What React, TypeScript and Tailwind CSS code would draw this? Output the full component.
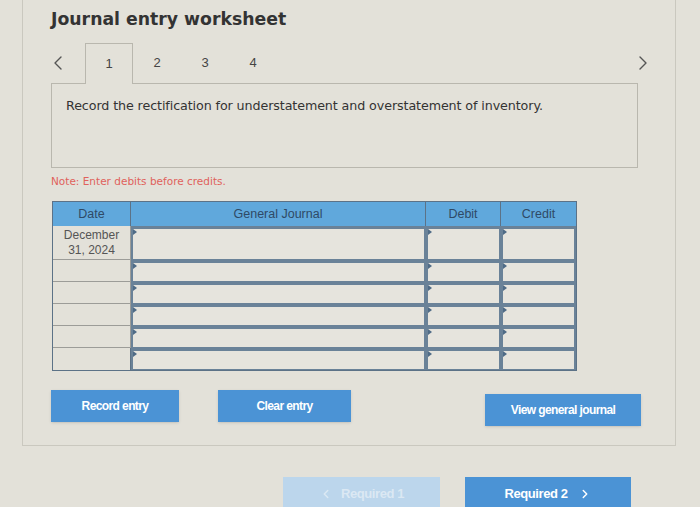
import { ChevronLeft, ChevronRight } from 'lucide-react'

const rows = [
  { date: 'December\n31, 2024', h: 'h-[34px]' },
  { date: '', h: 'h-[22px]' },
  { date: '', h: 'h-[22px]' },
  { date: '', h: 'h-[22px]' },
  { date: '', h: 'h-[22px]' },
  { date: '', h: 'h-[22px]' },
]

function InputCell() {
  return (
    <div className="relative h-full border-x-2 border-t-[3px] border-b border-[#6a8298] bg-[#e6e4dd]">
      {/* dropdown marker */}
      <span className="absolute left-0 top-0 w-0 h-0 border-y-[3px] border-y-transparent border-l-[4px] border-l-[#4f6b86]" />
    </div>
  )
}

function BlueButton({ label, w, className = '' }: { label: string; w: string; className?: string }) {
  return (
    <button
      className={`${w} h-[32px] bg-[#4b93d5] text-white text-[12px] font-bold tracking-[-0.6px] shadow-sm ${className}`}
      style={{ fontFamily: '"Liberation Sans", Arial, sans-serif' }}
    >
      {label}
    </button>
  )
}

export default function App() {
  return (
    <div className="w-[700px] h-[507px] overflow-hidden bg-[#e3e1d9] text-[#333]">
      {/* Main panel */}
      <div className="ml-[22px] w-[654px] h-[446px] border-x border-b border-[#cac8bf] pl-[28px] pt-[8px]">
        <h1
          className="h-[22px] leading-[22px] text-[17.3px] font-bold text-[#333]"
          style={{ fontFamily: '"DejaVu Sans", Verdana, sans-serif' }}
        >
          Journal entry worksheet
        </h1>

        {/* Tabs */}
        <div
          className="mt-[13px] flex items-stretch h-[40px] w-[587px] text-[13px] text-[#444]"
          style={{ fontFamily: '"Liberation Sans", Arial, sans-serif' }}
        >
          <div className="w-[34px] flex items-center justify-start -ml-[5px] mr-[5px] text-[#555]">
            <ChevronLeft size={24} strokeWidth={1.4} />
          </div>
          <div className="w-[48px] border-x border-t border-[#b9b7ae] flex items-center justify-center">1</div>
          <div className="w-[48px] flex items-center justify-center">2</div>
          <div className="w-[48px] flex items-center justify-center">3</div>
          <div className="w-[48px] flex items-center justify-center">4</div>
          <div className="flex-1 flex items-center justify-end -mr-[17px] text-[#555]">
            <ChevronRight size={24} strokeWidth={1.4} />
          </div>
        </div>

        {/* Instruction box */}
        <div className="relative w-[587px] h-[85px] border border-[#b9b7ae] pl-[14px] pt-[12px]">
          <span className="absolute -top-px left-[34px] w-[46px] h-px bg-[#e3e1d9]" />
          <p
            className="text-[12.7px] tracking-[-0.1px] text-[#333]"
            style={{ fontFamily: '"DejaVu Sans", Verdana, sans-serif' }}
          >
            Record the rectification for understatement and overstatement of inventory.
          </p>
        </div>

        <p
          className="mt-[6px] h-[14px] leading-[14px] text-[10.5px] text-[#e0625c]"
          style={{ fontFamily: '"DejaVu Sans", Verdana, sans-serif' }}
        >
          Note: Enter debits before credits.
        </p>

        {/* Journal table */}
        <div
          className="mt-[13px] ml-px w-[525px] border border-[#5c7287] text-[12.5px]"
          style={{ fontFamily: '"Liberation Sans", Arial, sans-serif' }}
        >
          <div className="grid grid-cols-[78px_295px_75px_75px] h-[24px] bg-[#60a8dc] text-[#2f4a66]">
            <div className="flex items-center justify-center border-r border-[#5c7287]">Date</div>
            <div className="flex items-center justify-center border-r border-[#5c7287]">General Journal</div>
            <div className="flex items-center justify-center border-r border-[#5c7287]">Debit</div>
            <div className="flex items-center justify-center">Credit</div>
          </div>
          {rows.map((r, i) => (
            <div key={i} className={`grid grid-cols-[78px_295px_75px_75px] ${r.h}`}>
              <div
                className={`flex items-center justify-center text-center whitespace-pre-line leading-[15px] text-[12px] text-[#555] border-r border-[#5c7287] ${
                  i < rows.length - 1 ? 'border-b border-[#9c9c98]' : ''
                }`}
              >
                {r.date}
              </div>
              <InputCell />
              <InputCell />
              <InputCell />
            </div>
          ))}
        </div>

        {/* Action buttons */}
        <div className="mt-[19px] flex w-[590px]">
          <BlueButton label="Record entry" w="w-[128px]" />
          <BlueButton label="Clear entry" w="w-[133px]" className="ml-[39px]" />
          <BlueButton label="View general journal" w="w-[156px]" className="ml-auto translate-y-[4px]" />
        </div>
      </div>

      {/* Navigation between requirements */}
      <div
        className="mt-[31px] flex pl-[283px] gap-[25px] text-[13px] font-bold tracking-[-0.4px]"
        style={{ fontFamily: '"Liberation Sans", Arial, sans-serif' }}
      >
        <button className="w-[157px] h-[34px] bg-[#bcd6ec] text-[#dbe8f3] flex items-center justify-center gap-[8px]">
          <ChevronLeft size={14} strokeWidth={2.5} />
          Required 1
        </button>
        <button className="w-[166px] h-[34px] bg-[#4b93d5] text-white flex items-center justify-center gap-[10px]">
          Required 2
          <ChevronRight size={14} strokeWidth={2.5} />
        </button>
      </div>
    </div>
  )
}
